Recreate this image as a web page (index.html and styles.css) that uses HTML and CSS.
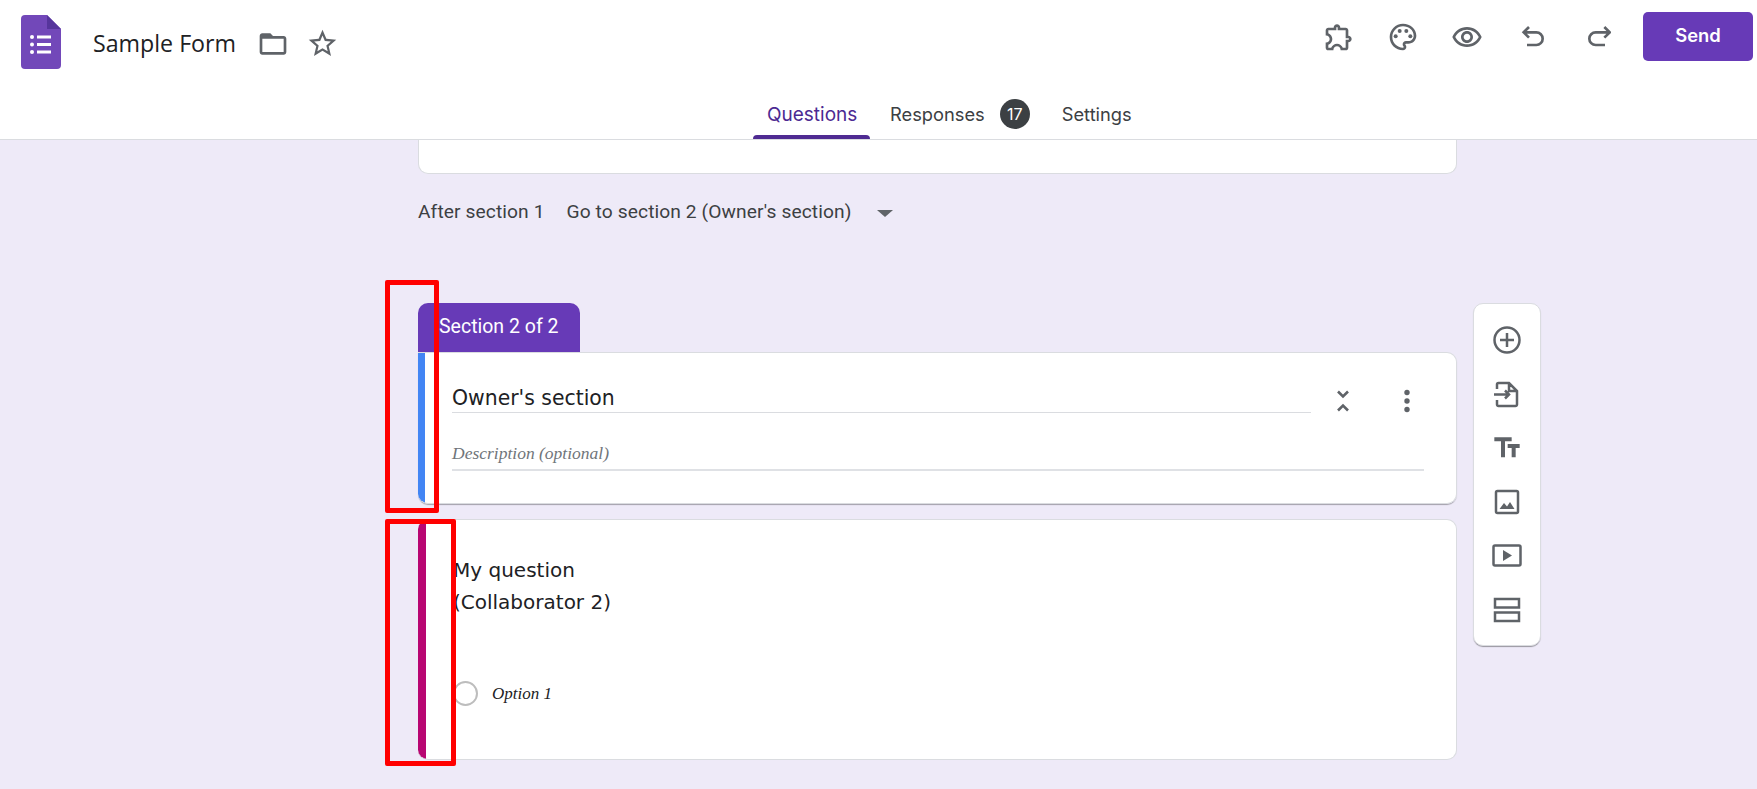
FILE: index.html
```html
<!DOCTYPE html>
<html lang="en">
<head>
<meta charset="utf-8">
<title>Sample Form</title>
<link rel="stylesheet" href="styles.css">
</head>
<body>
<header class="header">
  <div class="topbar">
    <svg class="logo" viewBox="0 0 40 54"><path d="M4 0H26L40 14V50a4 4 0 0 1-4 4H4a4 4 0 0 1-4-4V4a4 4 0 0 1 4-4z" fill="#7248b9"/><path d="M26 0L40 14H26z" fill="#56359c"/><g fill="#fff"><circle cx="11" cy="22" r="2"/><circle cx="11" cy="29.500" r="2"/><circle cx="11" cy="37" r="2"/><rect x="16" y="20.500" width="14" height="3"/><rect x="16" y="28" width="14" height="3"/><rect x="16" y="35.500" width="14" height="3"/></g></svg>
    <h1 class="doc-title">Sample Form</h1>
    <svg class="icon doc-icon-folder" viewBox="0 0 24 24"><path d="M20 6h-8l-2-2H4c-1.100 0-1.990.9-1.990 2L2 18c0 1.100.9 2 2 2h16c1.100 0 2-.9 2-2V8c0-1.100-.9-2-2-2zm0 12H4V8h16v10z"/></svg>
    <svg class="icon doc-icon-star" viewBox="0 0 24 24"><path d="M22 9.240l-7.190-.62L12 2 9.190 8.630 2 9.240l5.460 4.730L5.820 21 12 17.270 18.180 21l-1.630-7.030L22 9.240zM12 15.400l-3.760 2.270 1-4.280-3.320-2.880 4.380-.38L12 6.100l1.710 4.040 4.380.38-3.320 2.880 1 4.280L12 15.400z"/></svg>
    <div class="actions">
      <svg class="icon action" viewBox="0 0 24 24"><path d="M10.500 4.500c.28 0 .5.22.5.5v2h6v6h2c.28 0 .5.22.5.5s-.22.5-.5.5h-2v6h-2.120c-.68-1.750-2.390-3-4.380-3s-3.700 1.250-4.380 3H4v-2.120c1.750-.68 3-2.390 3-4.380 0-1.990-1.240-3.700-2.990-4.380L4 7h6V5c0-.28.22-.5.5-.5m0-2C9.120 2.500 8 3.620 8 5H4c-1.100 0-1.990.9-1.990 2v3.800h.29c1.490 0 2.700 1.210 2.700 2.700s-1.210 2.700-2.700 2.700H2V20c0 1.100.9 2 2 2h3.800v-.3c0-1.490 1.210-2.700 2.700-2.700s2.700 1.210 2.700 2.700v.3H17c1.100 0 2-.9 2-2v-4c1.380 0 2.500-1.120 2.500-2.500S20.380 11 19 11V7c0-1.100-.9-2-2-2h-4c0-1.380-1.120-2.500-2.500-2.500z"/></svg>
      <svg class="icon action" viewBox="0 0 24 24"><path d="M12 22C6.490 22 2 17.510 2 12S6.490 2 12 2s10 4.040 10 9c0 3.310-2.690 6-6 6h-1.770c-.28 0-.5.22-.5.5 0 .12.05.23.13.33.41.47.64 1.060.64 1.670 0 1.380-1.120 2.500-2.500 2.500zm0-18c-4.410 0-8 3.590-8 8s3.590 8 8 8c.28 0 .5-.22.5-.5 0-.16-.08-.28-.14-.35-.41-.46-.63-1.050-.63-1.650 0-1.380 1.120-2.500 2.500-2.500H16c2.210 0 4-1.790 4-4 0-3.860-3.590-7-8-7z"/><circle cx="6.500" cy="11.500" r="1.500"/><circle cx="9.500" cy="7.500" r="1.500"/><circle cx="14.500" cy="7.500" r="1.500"/><circle cx="17.500" cy="11.500" r="1.500"/></svg>
      <svg class="icon action" viewBox="0 0 24 24"><path d="M12 6.500c3.790 0 7.170 2.130 8.820 5.500-1.650 3.370-5.020 5.500-8.820 5.500S4.830 15.370 3.180 12C4.830 8.630 8.210 6.500 12 6.500m0-2C7 4.500 2.730 7.610 1 12c1.730 4.390 6 7.500 11 7.500s9.270-3.110 11-7.500c-1.730-4.390-6-7.500-11-7.500zm0 5c1.380 0 2.500 1.120 2.500 2.500s-1.120 2.500-2.500 2.500-2.500-1.120-2.500-2.500 1.120-2.500 2.500-2.500m0-2c-2.480 0-4.500 2.020-4.500 4.500s2.020 4.500 4.500 4.500 4.500-2.020 4.500-4.500-2.020-4.500-4.500-4.500z"/></svg>
      <svg class="icon action stroke" viewBox="0 0 24 24"><path d="M10.500 4.500l-4 4 4 4M7 8.500H16a4.750 4.750 0 0 1 0 9.500H9"/></svg>
      <svg class="icon action stroke" viewBox="0 0 24 24"><path d="M19 4.500l4 4-4 4M22.500 8.500H12.500a4.750 4.750 0 0 0 0 9.500h7"/></svg>
      <button class="send">Send</button>
    </div>
  </div>
  <nav class="tabs">
    <a class="tab active">Questions</a>
    <a class="tab">Responses<span class="badge">17</span></a>
    <a class="tab">Settings</a>
  </nav>
</header>

<main class="main">
  <div class="column">
    <div class="card-stub"></div>
    <div class="after">
      <span>After section 1</span>
      <span class="after-target">Go to section 2 (Owner's section)</span>
      <span class="caret"></span>
    </div>
    <div class="section-tab">Section 2 of 2</div>
    <section class="card card-section">
      <div class="title-row">
        <div class="section-title">Owner's section</div>
        <svg class="icon card-icon" viewBox="0 0 24 24"><path class="chev" d="M7 2.500L12 7.500l5-5M7 21.500L12 16.500l5 5"/></svg>
        <svg class="icon card-icon more" viewBox="0 0 24 24"><circle cx="12" cy="3.500" r="2.700"/><circle cx="12" cy="12" r="2.700"/><circle cx="12" cy="20.500" r="2.700"/></svg>
      </div>
      <div class="description">Description (optional)</div>
    </section>
    <section class="card card-question">
      <div class="question">My question<br>(Collaborator 2)</div>
      <div class="option"><span class="radio"></span><span class="option-label">Option 1</span></div>
    </section>
  </div>
  <aside class="toolbar">
    <svg class="tool stroke" viewBox="0 0 32 32"><circle cx="16" cy="16" r="12.500"/><path d="M16 9v14M9 16h14"/></svg>
    <svg class="tool stroke" viewBox="0 0 32 32"><path d="M6 11V6.500A1.500 1.500 0 0 1 7.500 5H18l8 8v13.500a1.500 1.500 0 0 1-1.500 1.500h-17A1.500 1.500 0 0 1 6 26.500V22M18 5v8h8M3 16.500h15M14 12.500l4 4-4 4"/></svg>
    <svg class="tool" viewBox="0 0 24 24"><path d="M2.500 4v3h5v12h3V7h5V4h-13zm19 5h-9v3h3v7h3v-7h3V9z"/></svg>
    <svg class="tool stroke" viewBox="0 0 32 32"><rect x="5" y="5" width="22" height="22" rx="1.500"/><path class="fill" d="M8.500 23l4.500-6 3 3.500 3-4.500 4.500 7z"/></svg>
    <svg class="tool stroke" viewBox="0 0 32 32"><rect x="2.500" y="5.500" width="27" height="20" rx="1.500"/><path class="fill" d="M12 10l9 5.500-9 5.500z"/></svg>
    <svg class="tool stroke" viewBox="0 0 32 32"><rect x="4" y="5" width="24" height="8.500"/><rect x="4" y="18.500" width="24" height="8.500"/></svg>
  </aside>
  <div class="marker marker-one"></div>
  <div class="marker marker-two"></div>
</main>
</body>
</html>
```

FILE: styles.css
```css
* { box-sizing: border-box; }

html, body {
  height: 100%;
}

body {
  margin: 0;
  overflow: hidden;
  background: #eeeaf8;
  font-family: "Roboto", "Liberation Sans", sans-serif;
  color: #202124;
}

.header {
  height: 140px;
  background: #fff;
  border-bottom: 1px solid #dadce0;
  position: relative;
}

.topbar {
  height: 94px;
  display: flex;
  align-items: flex-start;
  padding-left: 21px;
  padding-right: 4px;
}

.logo {
  width: 40px;
  height: 54px;
  margin-top: 15px;
  flex: none;
}

.doc-title {
  margin: 27px 0 0 32px;
  font-family: "Open Sans", sans-serif;
  font-weight: 400;
  font-size: 23.2px;
  line-height: 32px;
  color: #202124;
}

.icon {
  fill: #5f6368;
  flex: none;
}

.doc-icon-folder {
  width: 32px;
  height: 32px;
  margin: 28px 0 0 21px;
}

.doc-icon-star {
  width: 33px;
  height: 33px;
  margin: 27px 0 0 17px;
}

.actions {
  margin-left: auto;
  display: flex;
  align-items: center;
  height: 49px;
  margin-top: 12px;
}

.action {
  width: 32px;
  height: 32px;
  margin-right: 32px;
  position: relative;
}

.icon.stroke {
  fill: none;
  stroke: #5f6368;
  stroke-width: 2;
}

.send {
  width: 110px;
  height: 49px;
  background: #673ab7;
  color: #fff;
  border: 0;
  border-radius: 5px;
  padding: 0 0 3px;
  font-family: "Inter", sans-serif;
  font-weight: 600;
  font-size: 18.4px;
}

.tabs {
  display: flex;
  justify-content: flex-start;
  padding-left: 753px;
  height: 45px;
}

.tab {
  display: flex;
  align-items: center;
  height: 45px;
  padding: 0 14px 5px;
  margin-right: 4px;
  font-family: "Inter", sans-serif;
  font-size: 18.3px;
  color: #3c4043;
  position: relative;
}

.tab.active {
  color: #4c2a92;
  width: 117px;
  font-size: 19px;
  margin-right: 6px;
}

.tab.active::after {
  content: "";
  position: absolute;
  left: 0;
  right: 0;
  bottom: 0;
  height: 4px;
  background: #4f2b92;
  border-radius: 4px 4px 0 0;
}

.badge {
  margin-left: 15px;
  width: 30px;
  height: 30px;
  border-radius: 50%;
  background: #3c4043;
  color: #fff;
  display: flex;
  align-items: center;
  justify-content: center;
  font-size: 16px;
}

.main {
  display: flex;
  align-items: flex-start;
  padding-left: 418px;
  position: relative;
}

.column {
  width: 1039px;
  flex: none;
}

.card-stub {
  height: 34px;
  background: #fff;
  border: 1px solid #dadce0;
  border-top: 0;
  border-radius: 0 0 10px 10px;
}

.after {
  height: 129px;
  padding-top: 24px;
  display: flex;
  align-items: flex-start;
  font-size: 19.2px;
  line-height: 28px;
  letter-spacing: .1px;
  color: #3c4043;
}

.after-target {
  margin-left: 22px;
}

.caret {
  margin: 12px 0 0 26px;
  border-left: 8px solid transparent;
  border-right: 8px solid transparent;
  border-top: 7px solid #5f6368;
}

.section-tab {
  width: 162px;
  height: 49px;
  background: #673ab7;
  color: #fff;
  border-radius: 10px 10px 0 0;
  padding: 0 0 2px 21px;
  display: flex;
  align-items: center;
  font-size: 19.5px;
  font-weight: 400;
}

.card {
  background: #fff;
  border: 1px solid #dadce0;
  border-left: 0;
  border-radius: 10px;
}

.card-section {
  height: 152px;
  background: linear-gradient(to right, #4285f4 7px, #fff 7px);
  border-top-left-radius: 0;
  box-shadow: 0 2px 1px -1px rgba(0, 0, 0, .2), 0 1px 1px rgba(0, 0, 0, .14);
  padding: 23px 32px 0 34px;
  margin-bottom: 15px;
}

.title-row {
  display: flex;
  align-items: flex-start;
}

.section-title {
  width: 859px;
  height: 37px;
  border-bottom: 1px solid #dadce0;
  font-family: "DejaVu Sans", sans-serif;
  font-size: 20.400px;
  line-height: 45px;
  color: #202124;
  flex: none;
}

.card-icon {
  width: 24px;
  height: 24px;
  margin-top: 13px;
}

.chev {
  fill: none;
  stroke: #5f6368;
  stroke-width: 2.600;
}

.title-row .card-icon:first-of-type {
  margin-left: 20px;
}

.more {
  margin-left: 40px;
}

.description {
  margin-top: 18px;
  width: 972px;
  height: 40px;
  border-bottom: 2px solid #dfe1e5;
  font-family: "Liberation Serif", serif;
  font-style: italic;
  font-size: 17.500px;
  line-height: 44px;
  color: #70757a;
}

.card-question {
  height: 241px;
  background: linear-gradient(to right, #b80672 8px, #fff 8px);
  padding: 34px 0 0 35px;
}

.question {
  font-family: "DejaVu Sans", sans-serif;
  font-size: 20px;
  line-height: 32px;
  color: #202124;
}

.option {
  display: flex;
  align-items: center;
  margin-top: 63px;
}

.radio {
  width: 25px;
  height: 25px;
  border: 2px solid #bdbdbd;
  border-radius: 50%;
  flex: none;
}

.option-label {
  margin-left: 14px;
  font-family: "Liberation Serif", serif;
  font-style: italic;
  font-size: 17px;
  color: #202124;
}

.toolbar {
  width: 68px;
  height: 343px;
  margin: 163px 0 0 16px;
  flex: none;
  background: #fff;
  border-radius: 10px;
  border: 1px solid #dadce0;
  box-shadow: 0 2px 1px -1px rgba(0, 0, 0, .25), 0 1px 1px rgba(0, 0, 0, .14);
  display: flex;
  flex-direction: column;
  align-items: center;
  gap: 22px;
  padding-top: 20px;
}

.tool {
  width: 32px;
  height: 32px;
  fill: #5f6368;
  flex: none;
}

.tool.stroke {
  fill: none;
  stroke: #5f6368;
  stroke-width: 2.500;
}

.tool.stroke .fill {
  fill: #5f6368;
  stroke: none;
}

.marker {
  position: absolute;
  border: 5px solid #f00;
  border-radius: 2px;
}

.marker-one {
  left: 385px;
  top: 140px;
  width: 54px;
  height: 233px;
}

.marker-two {
  left: 385px;
  top: 379px;
  width: 71px;
  height: 247px;
}
```
